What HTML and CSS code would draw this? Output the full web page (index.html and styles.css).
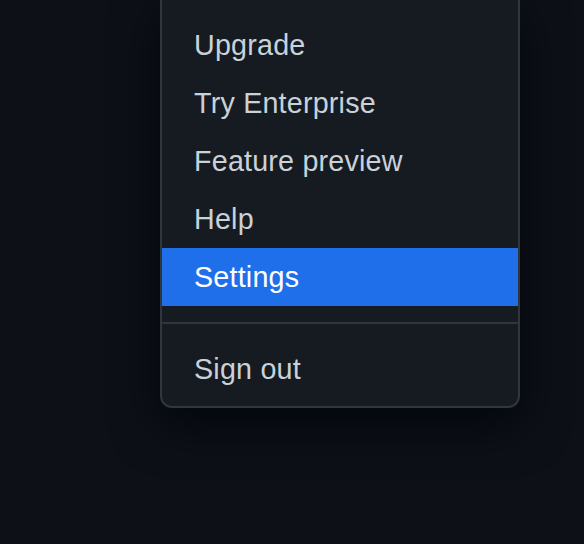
FILE: index.html
```html
<!DOCTYPE html>
<html>
<head>
<meta charset="utf-8">
<link rel="stylesheet" href="styles.css">
</head>
<body>
<div class="menu">
  <a class="item">Upgrade</a>
  <a class="item">Try Enterprise</a>
  <a class="item">Feature preview</a>
  <a class="item">Help</a>
  <a class="item active">Settings</a>
  <div class="divider"></div>
  <a class="item">Sign out</a>
</div>
</body>
</html>
```
FILE: styles.css
```css
html, body {
  margin: 0;
  padding: 0;
  background: #0d1117;
  height: 100%;
}
body {
  font-family: "Liberation Sans", Arial, sans-serif;
}
.menu {
  margin-left: 160px;
  width: 356px;
  background: #161b22;
  border: 2px solid #30363d;
  border-top: none;
  border-radius: 0 0 12px 12px;
  padding: 16px 0 8px;
  box-shadow: 0 16px 48px rgba(1, 4, 9, 0.85);
}
.item {
  display: block;
  height: 58px;
  line-height: 58px;
  padding-left: 32px;
  font-size: 28.7px;
  letter-spacing: 0.2px;
  color: #c9d1d9;
}
.item.active {
  background: #1f6feb;
  color: #ffffff;
}
.divider {
  height: 2px;
  background: #30363d;
  margin: 16px 0;
}
```
